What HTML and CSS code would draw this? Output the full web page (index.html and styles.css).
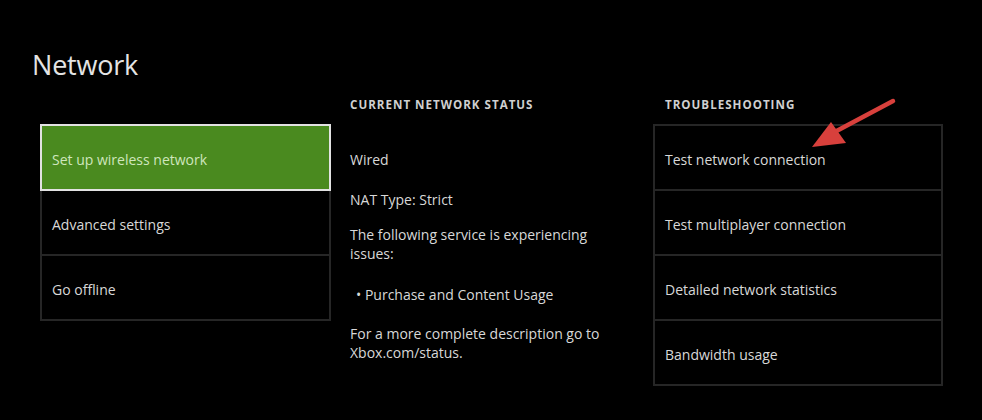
FILE: index.html
```html
<!DOCTYPE html>
<html>
<head>
<meta charset="utf-8">
<link rel="stylesheet" href="styles.css">
</head>
<body>
<div class="page">
  <h1 class="title">Network</h1>
  <div class="columns">
    <section class="col">
      <h2 class="heading">&nbsp;</h2>
      <div class="tiles">
        <div class="tile active">Set up wireless network</div>
        <div class="tile">Advanced settings</div>
        <div class="tile">Go offline</div>
      </div>
    </section>
    <section class="col">
      <h2 class="heading">Current network status</h2>
      <div class="status">
        <p class="s-wired">Wired</p>
        <p class="s-nat">NAT Type: Strict</p>
        <p class="s-issue">The following service is experiencing issues:</p>
        <p class="s-bullet">• Purchase and Content Usage</p>
        <p class="s-more">For a more complete description go to Xbox.com/status.</p>
      </div>
    </section>
    <section class="col">
      <h2 class="heading">Troubleshooting</h2>
      <div class="tiles">
        <div class="tile">Test network connection</div>
        <div class="tile">Test multiplayer connection</div>
        <div class="tile">Detailed network statistics</div>
        <div class="tile">Bandwidth usage</div>
      </div>
    </section>
  </div>
  <svg class="arrow" width="100" height="60" viewBox="0 0 100 60">
    <path d="M94 6 L30 40" stroke="#d8403c" stroke-width="4.5" stroke-linecap="round" fill="none"/>
    <polygon points="13,52 32,27 47,48" fill="#d8403c"/>
  </svg>
</div>
</body>
</html>
```
FILE: styles.css
```css
html, body {
  margin: 0;
  padding: 0;
  background: #000;
}
body {
  font-family: "Open Sans", "Noto Sans", sans-serif;
  color: #d6d6d6;
  width: 982px;
  height: 420px;
  overflow: hidden;
}
.page {
  position: relative;
  padding: 47px 0 0 40px;
}
.title {
  margin: 0 0 0 -8px;
  font-size: 27px;
  font-weight: 400;
  line-height: 36px;
  color: #e4e4e4;
  letter-spacing: -0.2px;
}
.columns {
  display: grid;
  grid-template-columns: 291px 284px 290px;
  column-gap: 19px;
  margin-top: 11px;
}
.heading {
  margin: 0 0 10px 0;
  padding-top: 2px;
  height: 18px;
  font-size: 11.6px;
  line-height: 18px;
  font-weight: 700;
  letter-spacing: 1px;
  text-transform: uppercase;
  color: #d0d0d0;
}
.col:nth-child(3) .heading {
  padding-left: 12px;
}
.col:first-child .tiles {
  margin-top: 1px;
}
.tiles {
  display: flex;
  flex-direction: column;
}
.tile {
  height: 67px;
  box-sizing: border-box;
  border: 2px solid #262626;
  margin-top: -2px;
  display: flex;
  align-items: center;
  padding: 3px 10px 0;
  font-size: 14px;
  color: #d8d8d8;
}
.tile:first-child {
  margin-top: 0;
}
.tile.active {
  background: #4a8a1f;
  border-color: #e2e2e2;
  color: #cfe6bd;
  position: relative;
}
.status {
  padding-top: 26px;
  font-size: 14px;
  line-height: 19px;
  color: #d8d8d8;
}
.status p {
  margin: 0;
}
.s-wired { margin-bottom: 21px !important; }
.s-nat { margin-bottom: 16px !important; }
.s-issue { margin-bottom: 22px !important; width: 260px; }
.s-bullet { margin-bottom: 20px !important; padding-left: 6px; }
.s-more { width: 270px; }
.arrow {
  position: absolute;
  left: 799px;
  top: 95px;
}
```
